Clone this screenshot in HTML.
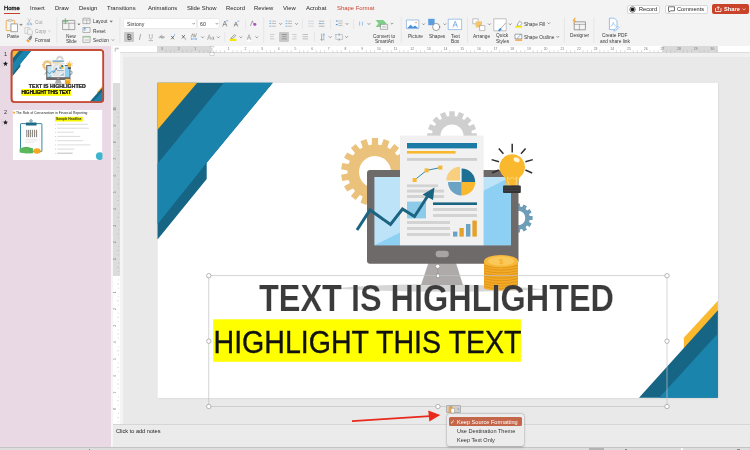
<!DOCTYPE html>
<html><head><meta charset="utf-8">
<style>
*{box-sizing:border-box;margin:0;padding:0}
html,body{width:750px;height:450px;overflow:hidden;background:#f3f3f3;font-family:"Liberation Sans",sans-serif;color:#333}
.a{position:absolute}
.t{position:absolute;white-space:nowrap;line-height:1;will-change:transform}
.tab{font-size:5.9px;color:#282828;top:5.6px}
.lb{font-size:4.8px;color:#3a3a3a;margin-top:1.2px}
svg.a{will-change:transform}
</style></head><body>
<div class="a" style="left:0;top:0;width:750px;height:450px;overflow:hidden">

<!-- ribbon background -->
<div class="a" style="left:0;top:0;width:750px;height:46px;background:#f3f3f3"></div>

<!-- tabs -->
<div class="t tab" style="left:4px;color:#111;-webkit-text-stroke:0.3px #111">Home</div>
<div class="a" style="left:4px;top:13px;width:16px;height:1px;background:#c43e2a"></div>
<div class="t tab" style="left:29.6px">Insert</div>
<div class="t tab" style="left:55px">Draw</div>
<div class="t tab" style="left:78.5px">Design</div>
<div class="t tab" style="left:107.2px">Transitions</div>
<div class="t tab" style="left:147.5px">Animations</div>
<div class="t tab" style="left:186.7px">Slide Show</div>
<div class="t tab" style="left:225.9px">Record</div>
<div class="t tab" style="left:254.1px">Review</div>
<div class="t tab" style="left:282.7px">View</div>
<div class="t tab" style="left:305.9px">Acrobat</div>
<div class="t tab" style="left:337.3px;color:#d0442c">Shape Format</div>

<!-- right buttons -->
<div class="a" style="left:626.5px;top:4.5px;width:33px;height:9.5px;background:#fff;border:0.5px solid #d8d8d8;border-radius:2px"></div>
<svg class="a" style="left:629px;top:6px" width="7" height="7" viewBox="0 0 7 7"><circle cx="3.5" cy="3.5" r="2.7" fill="none" stroke="#222" stroke-width="0.7"/><circle cx="3.5" cy="3.5" r="1.8" fill="#111"/></svg>
<div class="t" style="left:638.8px;top:7.2px;font-size:5.6px;color:#222">Record</div>
<div class="a" style="left:664.5px;top:4.5px;width:43px;height:9.5px;background:#fff;border:0.5px solid #d8d8d8;border-radius:2px"></div>
<svg class="a" style="left:667.5px;top:6.2px" width="7" height="7" viewBox="0 0 7 7"><path d="M0.5 0.8h6v4h-4l-1.5 1.5v-1.5h-0.5z" fill="none" stroke="#333" stroke-width="0.7"/></svg>
<div class="t" style="left:676.8px;top:7.2px;font-size:5.6px;color:#222">Comments</div>
<div class="a" style="left:711.5px;top:4px;width:37px;height:10px;background:#c9432a;border-radius:2px"></div>
<svg class="a" style="left:715px;top:6px" width="7" height="6" viewBox="0 0 7 6"><path d="M0.5 2v3.5h5.5v-3.5M3.2 4v-3.3M1.8 2l1.4-1.4 1.4 1.4" fill="none" stroke="#fff" stroke-width="0.8"/></svg>
<div class="t" style="left:723.8px;top:6.8px;font-size:5.7px;color:#fff;font-weight:bold">Share</div>
<svg class="a" style="left:742px;top:8px" width="4" height="3" viewBox="0 0 4 3"><path d="M0.5 0.5l1.5 1.5 1.5-1.5" fill="none" stroke="#fff" stroke-width="0.6"/></svg>

<!-- RIBBON ROW CONTENT -->
<!-- Ribbon labels -->
<div class="t lb" style="left:7.3px;top:33.6px">Paste</div>
<div class="t lb" style="left:34.8px;top:19.4px;color:#9a9a9a">Cut</div>
<div class="t lb" style="left:34.8px;top:29px;color:#9a9a9a">Copy</div>
<div class="t lb" style="left:34.8px;top:37.6px">Format</div>
<div class="t lb" style="left:66px;top:33.6px">New</div>
<div class="t lb" style="left:65.8px;top:38.4px">Slide</div>
<div class="t lb" style="left:92.8px;top:19.2px">Layout</div>
<div class="t lb" style="left:92.8px;top:28.4px">Reset</div>
<div class="t lb" style="left:92.8px;top:37.7px">Section</div>
<div class="t lb" style="left:372.8px;top:33.6px">Convert to</div>
<div class="t lb" style="left:374.6px;top:38.4px">SmartArt</div>
<div class="t lb" style="left:407.5px;top:33.6px">Picture</div>
<div class="t lb" style="left:428.6px;top:33.6px">Shapes</div>
<div class="t lb" style="left:450.6px;top:33.6px">Text</div>
<div class="t lb" style="left:450.8px;top:38.4px">Box</div>
<div class="t lb" style="left:473px;top:33.6px">Arrange</div>
<div class="t lb" style="left:496.3px;top:33.2px">Quick</div>
<div class="t lb" style="left:495.5px;top:38.4px">Styles</div>
<div class="t lb" style="left:524.4px;top:21.6px">Shape Fill</div>
<div class="t lb" style="left:524.4px;top:35px">Shape Outline</div>
<div class="t lb" style="left:570.2px;top:33.2px">Designer</div>
<div class="t lb" style="left:601.8px;top:33.2px">Create PDF</div>
<div class="t lb" style="left:599.8px;top:38.4px">and share link</div>

<!-- font boxes -->
<div class="a" style="left:124.2px;top:19.2px;width:71.8px;height:8.9px;background:#fff;border-radius:1.2px;box-shadow:0 0 0 0.4px #e2e2e2"></div>
<div class="t" style="left:127px;top:22px;font-size:5.2px;color:#333">Sintony</div>
<div class="a" style="left:197.6px;top:19.2px;width:21.5px;height:8.9px;background:#fff;border-radius:1.2px;box-shadow:0 0 0 0.4px #e2e2e2"></div>
<div class="t" style="left:199.8px;top:22px;font-size:5.2px;color:#333">60</div>
<!-- selected B and center align -->
<div class="a" style="left:124.2px;top:32.3px;width:9.8px;height:9.8px;background:#c9c9c9;border-radius:1px"></div>
<div class="a" style="left:279.3px;top:32.2px;width:9.8px;height:9.8px;background:#c9c9c9;border-radius:1px"></div>

<svg class="a" style="left:0;top:0" width="750" height="46" viewBox="0 0 750 46">
 <g fill="none" stroke-linecap="round" stroke-linejoin="round">
  <!-- separators -->
  <g stroke="#dedede" stroke-width="0.6">
   <path d="M56.8 17.4V42.6M119.9 17.4V42.6M245.5 20V28.5M224.7 32.5V41.5M263.7 17.4V42.6M302.4 20V28.5M330.5 20V28.5M353.5 20V28.5M314.5 32.5V41.5M401.2 17.4V42.6M467.5 17.4V42.6M564.4 17.4V42.6M593.9 17.4V42.6"/>
  </g>
  <!-- Paste -->
  <rect x="6.2" y="20.4" width="8.4" height="10.2" rx="0.8" stroke="#f0a848" stroke-width="0.9"/>
  <path d="M8.6 21.2h3.6l-0.6-1.8h-2.4z" stroke="#a9a9a9" stroke-width="0.6" fill="#eee"/>
  <rect x="11.3" y="23.9" width="6.2" height="7.8" stroke="#8f8f8f" stroke-width="0.8" fill="#fff"/>
  <path d="M20 24.6l1 1 1-1z" fill="#555" stroke="#555" stroke-width="0.4"/>
  <!-- Cut scissors -->
  <path d="M28 18.8l2.6 4.6M30.6 18.8L28 23.4" stroke="#b4b4b4" stroke-width="0.6"/>
  <circle cx="27.8" cy="24.2" r="0.9" stroke="#7fb0dc" stroke-width="0.6"/>
  <circle cx="30.8" cy="24.2" r="0.9" stroke="#7fb0dc" stroke-width="0.6"/>
  <!-- Copy -->
  <rect x="25.3" y="27.6" width="4.4" height="5.8" stroke="#b8b8b8" stroke-width="0.6"/>
  <path d="M28 29.2h2.6l1.8 1.8v3.4h-4.4z" stroke="#b8b8b8" stroke-width="0.6" fill="#f3f3f3"/>
  <path d="M48.3 30.7l1.2 1.1 1.2-1.1" stroke="#aaa" stroke-width="0.5"/>
  <!-- Format painter -->
  <path d="M26.2 40.4l2.2 2.2 1.4-1.4-2.2-2.2z" fill="#f0a040"/>
  <path d="M28 38.6l2.2 2.2 1.6-2.6 0.4-2.4-1.4-0.2z" fill="#8a8a8a"/>
  <!-- New slide -->
  <rect x="63" y="20.4" width="11.8" height="9.2" stroke="#9a9a9a" stroke-width="0.9"/>
  <path d="M63 23.2h11.8M68.9 23.2v6.4" stroke="#9a9a9a" stroke-width="0.8"/>
  <path d="M65.3 18.6v5.2M62.7 21.2h5.2" stroke="#4cae5a" stroke-width="0.8"/>
  <path d="M78 24l0.9 0.9 0.9-0.9z" fill="#555" stroke="#555" stroke-width="0.4"/>
  <!-- Layout -->
  <rect x="83.3" y="18.2" width="6.8" height="5.4" stroke="#9a9a9a" stroke-width="0.7"/>
  <path d="M83.3 20h6.8M86.7 20v3.6" stroke="#9a9a9a" stroke-width="0.6"/>
  <path d="M110.2 21.2l1 1 1-1z" fill="#555" stroke="#555" stroke-width="0.4"/>
  <!-- Reset -->
  <rect x="83.3" y="27.5" width="6.8" height="5" stroke="#9a9a9a" stroke-width="0.7"/>
  <path d="M84.8 30.6v-2.6M83.9 28.9l0.9-0.9 0.9 0.9" stroke="#3a8ad6" stroke-width="0.6"/>
  <!-- Section -->
  <rect x="83.3" y="36.4" width="6.8" height="6" stroke="#9a9a9a" stroke-width="0.7"/>
  <path d="M83.3 37h6.8" stroke="#8fd08f" stroke-width="1.2"/>
  <path d="M84.8 40h3.8" stroke="#9a9a9a" stroke-width="0.6"/>
  <path d="M112 39.6l1 1 1-1" stroke="#555" stroke-width="0.5"/>
  <!-- font chevrons -->
  <path d="M192.7 23.3l1 1 1-1M216 23.3l1 1 1-1" stroke="#444" stroke-width="0.5"/>
  <!-- grow / shrink -->
  <path d="M222.8 26.2l2-5.2 2 5.2M223.5 24.4h2.6" stroke="#666" stroke-width="0.6"/>
  <path d="M226.6 20.8h1.2" stroke="#3a8ad6" stroke-width="0.6"/>
  <path d="M234.2 26.2l1.7-4.2 1.7 4.2M234.8 24.7h2.2" stroke="#666" stroke-width="0.6"/>
  <path d="M237.6 21.2h1.2" stroke="#3a8ad6" stroke-width="0.6"/>
  <!-- clear formatting -->
  <path d="M250.6 25.6l1.8-4.8 1.8 4.8" stroke="#777" stroke-width="0.6"/>
  <circle cx="255" cy="24.4" r="1.4" fill="#b04cc0" stroke="none"/>
  <!-- B I U ab x2 x2 -->
  <path d="M128 34.4v5.2h1.9c0.9 0 1.3-0.6 1.3-1.3s-0.5-1.3-1.3-1.3h-1.9M128 34.4h1.7c0.7 0 1.1 0.5 1.1 1.1s-0.4 1.2-1.1 1.2" stroke="#444" stroke-width="0.8"/>
  <path d="M140.6 34.4l-1.2 5.2" stroke="#777" stroke-width="0.6"/>
  <path d="M149.4 34.4v3c0 1 0.6 1.6 1.4 1.6s1.4-0.6 1.4-1.6v-3M149 40.6h3.6" stroke="#888" stroke-width="0.55"/>
  <path d="M159.8 38l0.9-2.2 0.9 2.2M161.8 35v3M161.8 37.2c0.6-1 2.2-1 2.2 0.2s-1.6 1.2-2.2 0.2M158.8 37h5.6" stroke="#888" stroke-width="0.5"/>
  <path d="M171.4 36.2l2.4 2.8M173.8 36.2l-2.4 2.8" stroke="#444" stroke-width="0.7"/>
  <path d="M174.6 34.3v1" stroke="#3a8ad6" stroke-width="0.5"/>
  <path d="M182.2 35.4l2.4 2.8M184.6 35.4l-2.4 2.8" stroke="#444" stroke-width="0.7"/>
  <path d="M185.6 38.8v1" stroke="#3a8ad6" stroke-width="0.5"/>
  <!-- AV -->
  <path d="M191.2 37.2l1.3-3.4 1.3 3.4M194 33.8l1.2 3.4 1.2-3.4" stroke="#666" stroke-width="0.5"/>
  <path d="M191.2 39h5.4M191.8 38.4l-0.6 0.6 0.6 0.6M196 38.4l0.6 0.6-0.6 0.6" stroke="#3a8ad6" stroke-width="0.5"/>
  <path d="M201.6 36.8l1 1 1-1M217.4 36.8l1 1 1-1M239.9 36.8l1 1 1-1M255.8 36.8l1 1 1-1" stroke="#444" stroke-width="0.55"/>
  <!-- Aa -->
  <path d="M207.6 39.6l1.6-4.8 1.6 4.8M208.2 38h2" stroke="#888" stroke-width="0.5"/>
  <path d="M213.6 37.2c-0.8-0.6-2.2-0.2-2 1.2 0.2 1.2 2 1.2 2 0v-1.2v2.4" stroke="#888" stroke-width="0.5"/>
  <!-- highlighter -->
  <path d="M231.5 37.6l3-3 1.1 1.1-3 3-1.6 0.4z" stroke="#555" stroke-width="0.55"/>
  <rect x="229.8" y="38.8" width="6.6" height="2.2" fill="#f5e800" stroke="none"/>
  <!-- font colour A -->
  <path d="M247.4 39.4l1.6-4.8 1.6 4.8M248 37.8h2" stroke="#888" stroke-width="0.55"/>
  <rect x="246.5" y="40" width="5" height="1.6" fill="#fff" stroke="none"/>
  <!-- bullets -->
  <g stroke="#3a8ad6" stroke-width="0.9"><path d="M270 21.2h0.3M270 23.5h0.3M270 26.2h0.3"/></g>
  <g stroke="#8a8a8a" stroke-width="0.5"><path d="M272 21.2h3.6M272 23.5h3.6M272 26.2h3.6"/></g>
  <path d="M279.7 23.5l1 1 1-1M295.6 23.5l1 1 1-1M346 23.5l1 1 1-1M368 23.5l1 1 1-1M391 23.2l1 1 1-1M422.6 23.8l1 1 1-1M443.8 23.8l1 1 1-1M488.4 23.8l1 1 1-1M509.2 23.8l1 1 1-1M547.8 22.8l1 1 1-1M556.8 36.4l1 1 1-1" stroke="#444" stroke-width="0.55"/>
  <g stroke="#3a8ad6" stroke-width="0.6"><path d="M286 21h0.8M286 23.6h0.8M286 26.2h0.8"/></g>
  <g stroke="#8a8a8a" stroke-width="0.5"><path d="M288 21.2h3.6M288 23.5h3.6M288 26.2h3.6"/></g>
  <!-- indent -->
  <path d="M308.6 21.2h4.8M311 23.6h2.4M308.6 26.2h4.8" stroke="#bbb" stroke-width="0.5"/>
  <path d="M308.5 23.6h1.2" stroke="#9cc4ea" stroke-width="0.6"/>
  <path d="M319.2 21.2h4.8M321.6 23.6h2.4M319.2 26.2h4.8" stroke="#777" stroke-width="0.5"/>
  <path d="M319.2 23.6h1.4" stroke="#3a8ad6" stroke-width="0.7"/>
  <!-- line list -->
  <path d="M336.3 21h0.9M336.3 24.6h0.9" stroke="#3a8ad6" stroke-width="1"/>
  <path d="M338.6 21h3.6M338.6 23.2h3.6M338.6 25.4h3.6" stroke="#8a8a8a" stroke-width="0.5"/>
  <!-- columns -->
  <path d="M359.6 22v3.2M362.4 22v3.2" stroke="#9cc4ea" stroke-width="1"/>
  <!-- SmartArt -->
  <path d="M375.6 20l7.6 0 3.4 3.6-3 3.4h-8l2.8-3.4z" fill="#7fcf8a" stroke="none"/>
  <rect x="380.8" y="24.4" width="6.8" height="5" fill="#f5f5f5" stroke="#888" stroke-width="0.6"/>
  <path d="M382.3 26.9h3.8" stroke="#888" stroke-width="0.5"/>
  <!-- row2 align -->
  <path d="M270.4 34.5h3.8M270.4 36.7h2.6M270.4 38.9h3.8" stroke="#aaa" stroke-width="0.5"/>
  <path d="M282 34.5h4.6M282.6 36.7h3.4M282 38.9h4.6" stroke="#777" stroke-width="0.6"/>
  <path d="M292.4 34.5h3.8M293.6 36.7h2.6M292.4 38.9h3.8" stroke="#aaa" stroke-width="0.5"/>
  <path d="M303 34.5h4.6M303 36.7h4.6M303 38.9h4.6" stroke="#888" stroke-width="0.5"/>
  <!-- text direction / align text -->
  <path d="M321.6 34v6M320.8 39.4l1 1 1-1" stroke="#666" stroke-width="0.5"/>
  <path d="M323.8 37v-3M323 34.8l0.8-0.8 0.8 0.8M323.8 40v-2" stroke="#3a8ad6" stroke-width="0.5"/>
  <path d="M329.2 36.6l1 1 1-1M345.6 36.6l1 1 1-1" stroke="#444" stroke-width="0.55"/>
  <rect x="335.8" y="34.6" width="6.8" height="4.8" stroke="#9a9a9a" stroke-width="0.5" stroke-dasharray="1.2 0.8"/>
  <path d="M339.2 33.6v1.8M339.2 38.8v1.6" stroke="#3a8ad6" stroke-width="0.6"/>
  <!-- Picture -->
  <rect x="406.8" y="20" width="12" height="8.6" stroke="#6a9fd8" stroke-width="0.6" fill="#fff"/>
  <path d="M407.2 28.2l3.4-3.4 2.4 2.2 2-1.6 3.4 2.8z" fill="#4a8fd8" stroke="none"/>
  <circle cx="416" cy="22.6" r="0.8" fill="#f0a040" stroke="none"/>
  <!-- Shapes -->
  <rect x="428.2" y="18.8" width="6.4" height="6.4" fill="#5b9ee0" stroke="none"/>
  <circle cx="436.2" cy="27" r="3.6" fill="#fff" stroke="#666" stroke-width="0.6"/>
  <!-- Text box -->
  <rect x="448.6" y="19.2" width="13" height="10.4" fill="#fff" stroke="#6a9fd8" stroke-width="0.6"/>
  <path d="M453 27l2.2-5.8 2.2 5.8M453.8 25h2.8" stroke="#4a8fd8" stroke-width="0.6"/>
  <!-- Arrange -->
  <rect x="473.2" y="18.8" width="5" height="5" fill="#fff" stroke="#888" stroke-width="0.5"/>
  <rect x="475.6" y="21.4" width="6.4" height="6" fill="#f5c56a" stroke="none"/>
  <rect x="480" y="25.6" width="4.8" height="5" fill="#fff" stroke="#888" stroke-width="0.5"/>
  <!-- Quick styles -->
  <rect x="494.2" y="18.8" width="12" height="12" fill="#fff" stroke="#888" stroke-width="0.5"/>
  <path d="M498 30.4l2.4-2.6 1.4 1.4-2.6 2.2z" fill="#3a8ad6" stroke="none"/>
  <path d="M501 28.2l4.6-5" stroke="#666" stroke-width="0.5"/>
  <!-- Shape fill -->
  <path d="M517.2 24.8l2.4-3.6 2.6 2.2-2.6 2.6z" fill="#fff" stroke="#555" stroke-width="0.5"/>
  <rect x="515.2" y="26" width="7" height="1.6" fill="#f5e800" stroke="none"/>
  <!-- Shape outline -->
  <rect x="515.4" y="34.2" width="6.4" height="4.6" fill="#fff" stroke="#555" stroke-width="0.5"/>
  <path d="M517.4 38l3.2-3.2" stroke="#3a8ad6" stroke-width="0.7"/>
  <rect x="515.2" y="39.4" width="7" height="1.4" fill="#f0a040" stroke="none"/>
  <!-- Designer -->
  <rect x="574.6" y="21.8" width="10.8" height="8" fill="#f4f4f4" stroke="#888" stroke-width="0.8"/>
  <path d="M574.6 24.4h10.8M579.4 24.4v5.4" stroke="#888" stroke-width="0.6"/>
  <path d="M574.6 17.8l-2.2 3.4h2l-1.4 3.2 3.2-4h-2l1.6-2.6z" fill="#f0a030" stroke="none"/>
  <!-- Create PDF -->
  <path d="M609.8 18.2h4.6l2.6 2.6v8.8h-7.2z" fill="#fff" stroke="#5a9ee0" stroke-width="0.6"/>
  <path d="M611 26.4c1-0.4 2-2 2.2-4 0.6 2 1.6 3.2 2.6 3.6" stroke="#5a9ee0" stroke-width="0.5"/>
  <path d="M614.2 29.8l3.6-3.6 1.2 1.2-3.6 3.6h-1.2z" fill="#e8f1fb" stroke="#5a9ee0" stroke-width="0.5"/>
 </g>
</svg>


<!-- sidebar -->
<div class="a" style="left:0;top:46px;width:111px;height:401px;background:#e9d9e5"></div>
<div class="a" style="left:111px;top:46px;width:2px;height:401px;background:#f6f6f6"></div>

<!-- horizontal ruler strip -->
<div class="a" style="left:113px;top:46px;width:637px;height:10.5px;background:#f0f0f0"></div>
<div class="a" style="left:120px;top:46px;width:630px;height:7.3px;background:#fff;border-bottom:0.5px solid #ddd"></div>
<div class="a" style="left:157.3px;top:46px;width:54.7px;height:7.3px;background:#d9d9d9"></div>
<div class="a" style="left:662px;top:46px;width:56px;height:7.3px;background:#d9d9d9"></div>


<!-- vertical ruler -->
<div class="a" style="left:113px;top:46px;width:7px;height:378px;background:#fff"></div>
<div class="a" style="left:112.5px;top:82.8px;width:7px;height:192.9px;background:#dcdcdc"></div>
<div class="a" style="left:119.5px;top:53.3px;width:3.5px;height:370.7px;background:#f4f4f4"></div>

<svg class="a" style="left:0;top:0" width="750" height="450" viewBox="0 0 750 450">
<path d="M166.1 50V52.8M170.3 50V52.8M174.5 50V52.8M182.8 50V52.8M187.0 50V52.8M191.2 50V52.8M199.5 50V52.8M203.7 50V52.8M207.8 50V52.8M216.2 50V52.8M220.3 50V52.8M224.5 50V52.8M232.8 50V52.8M237.0 50V52.8M241.2 50V52.8M249.5 50V52.8M253.7 50V52.8M257.9 50V52.8M266.2 50V52.8M270.4 50V52.8M274.6 50V52.8M282.9 50V52.8M287.1 50V52.8M291.2 50V52.8M299.6 50V52.8M303.7 50V52.8M307.9 50V52.8M316.2 50V52.8M320.4 50V52.8M324.6 50V52.8M332.9 50V52.8M337.1 50V52.8M341.3 50V52.8M349.6 50V52.8M353.8 50V52.8M357.9 50V52.8M366.3 50V52.8M370.5 50V52.8M374.6 50V52.8M383.0 50V52.8M387.1 50V52.8M391.3 50V52.8M399.6 50V52.8M403.8 50V52.8M408.0 50V52.8M416.3 50V52.8M420.5 50V52.8M424.7 50V52.8M433.0 50V52.8M437.2 50V52.8M441.4 50V52.8M449.7 50V52.8M453.9 50V52.8M458.0 50V52.8M466.4 50V52.8M470.5 50V52.8M474.7 50V52.8M483.1 50V52.8M487.2 50V52.8M491.4 50V52.8M499.7 50V52.8M503.9 50V52.8M508.1 50V52.8M516.4 50V52.8M520.6 50V52.8M524.8 50V52.8M533.1 50V52.8M537.3 50V52.8M541.4 50V52.8M549.8 50V52.8M553.9 50V52.8M558.1 50V52.8M566.5 50V52.8M570.6 50V52.8M574.8 50V52.8M583.1 50V52.8M587.3 50V52.8M591.5 50V52.8M599.8 50V52.8M604.0 50V52.8M608.1 50V52.8M616.5 50V52.8M620.7 50V52.8M624.8 50V52.8M633.2 50V52.8M637.3 50V52.8M641.5 50V52.8M649.8 50V52.8M654.0 50V52.8M658.2 50V52.8M666.5 50V52.8M670.7 50V52.8M674.9 50V52.8M683.2 50V52.8M687.4 50V52.8M691.5 50V52.8M699.9 50V52.8M704.1 50V52.8M708.2 50V52.8M716.6 50V52.8" stroke="#b4b4b4" stroke-width="0.4" fill="none"/>
<g font-family="Liberation Sans" font-size="3.4" fill="#777"><text x="162.0" y="49.6" text-anchor="middle">3</text><text x="178.6" y="49.6" text-anchor="middle">2</text><text x="195.3" y="49.6" text-anchor="middle">1</text><text x="228.7" y="49.6" text-anchor="middle">1</text><text x="245.4" y="49.6" text-anchor="middle">2</text><text x="262.0" y="49.6" text-anchor="middle">3</text><text x="278.7" y="49.6" text-anchor="middle">4</text><text x="295.4" y="49.6" text-anchor="middle">5</text><text x="312.1" y="49.6" text-anchor="middle">6</text><text x="328.8" y="49.6" text-anchor="middle">7</text><text x="345.4" y="49.6" text-anchor="middle">8</text><text x="362.1" y="49.6" text-anchor="middle">9</text><text x="378.8" y="49.6" text-anchor="middle">10</text><text x="395.5" y="49.6" text-anchor="middle">11</text><text x="412.2" y="49.6" text-anchor="middle">12</text><text x="428.8" y="49.6" text-anchor="middle">13</text><text x="445.5" y="49.6" text-anchor="middle">14</text><text x="462.2" y="49.6" text-anchor="middle">15</text><text x="478.9" y="49.6" text-anchor="middle">16</text><text x="495.6" y="49.6" text-anchor="middle">17</text><text x="512.2" y="49.6" text-anchor="middle">18</text><text x="528.9" y="49.6" text-anchor="middle">19</text><text x="545.6" y="49.6" text-anchor="middle">20</text><text x="562.3" y="49.6" text-anchor="middle">21</text><text x="579.0" y="49.6" text-anchor="middle">22</text><text x="595.6" y="49.6" text-anchor="middle">23</text><text x="612.3" y="49.6" text-anchor="middle">24</text><text x="629.0" y="49.6" text-anchor="middle">25</text><text x="645.7" y="49.6" text-anchor="middle">26</text><text x="662.4" y="49.6" text-anchor="middle">27</text><text x="679.0" y="49.6" text-anchor="middle">28</text><text x="695.7" y="49.6" text-anchor="middle">29</text><text x="712.4" y="49.6" text-anchor="middle">30</text></g>
<path d="M118 113.1H119M117.2 117.2H119M118 121.4H119M118 129.8H119M117.2 133.9H119M118 138.1H119M118 146.4H119M117.2 150.6H119M118 154.8H119M118 163.1H119M117.2 167.3H119M118 171.4H119M118 179.8H119M117.2 184.0H119M118 188.1H119M118 196.5H119M117.2 200.6H119M118 204.8H119M118 213.1H119M117.2 217.3H119M118 221.5H119M118 229.8H119M117.2 234.0H119M118 238.2H119M118 246.5H119M117.2 250.7H119M118 254.8H119M118 263.2H119M117.2 267.4H119M118 271.5H119M118 279.9H119M117.2 284.0H119M118 288.2H119M118 296.6H119M117.2 300.7H119M118 304.9H119M118 313.2H119M117.2 317.4H119M118 321.6H119M118 329.9H119M117.2 334.1H119M118 338.2H119M118 346.6H119M117.2 350.8H119M118 354.9H119M118 363.3H119M117.2 367.4H119M118 371.6H119M118 379.9H119M117.2 384.1H119M118 388.3H119M118 396.6H119M117.2 400.8H119M118 405.0H119M118 413.3H119M117.2 417.5H119M118 421.6H119" stroke="#9a9a9a" stroke-width="0.35" fill="none"/>
<g font-family="Liberation Sans" font-size="3.4" fill="#777"><text transform="translate(116.2 108.9) rotate(-90)" text-anchor="middle" y="0">10</text><text transform="translate(116.2 125.6) rotate(-90)" text-anchor="middle" y="0">9</text><text transform="translate(116.2 142.3) rotate(-90)" text-anchor="middle" y="0">8</text><text transform="translate(116.2 158.9) rotate(-90)" text-anchor="middle" y="0">7</text><text transform="translate(116.2 175.6) rotate(-90)" text-anchor="middle" y="0">6</text><text transform="translate(116.2 192.3) rotate(-90)" text-anchor="middle" y="0">5</text><text transform="translate(116.2 209.0) rotate(-90)" text-anchor="middle" y="0">4</text><text transform="translate(116.2 225.7) rotate(-90)" text-anchor="middle" y="0">3</text><text transform="translate(116.2 242.3) rotate(-90)" text-anchor="middle" y="0">2</text><text transform="translate(116.2 259.0) rotate(-90)" text-anchor="middle" y="0">1</text><text transform="translate(116.2 292.4) rotate(-90)" text-anchor="middle" y="0">1</text><text transform="translate(116.2 309.1) rotate(-90)" text-anchor="middle" y="0">2</text><text transform="translate(116.2 325.7) rotate(-90)" text-anchor="middle" y="0">3</text><text transform="translate(116.2 342.4) rotate(-90)" text-anchor="middle" y="0">4</text><text transform="translate(116.2 359.1) rotate(-90)" text-anchor="middle" y="0">5</text><text transform="translate(116.2 375.8) rotate(-90)" text-anchor="middle" y="0">6</text><text transform="translate(116.2 392.5) rotate(-90)" text-anchor="middle" y="0">7</text><text transform="translate(116.2 409.1) rotate(-90)" text-anchor="middle" y="0">8</text></g>
<path d="M209.8 46.4h4.4l-2.2 2.4zM209.8 52.2h4.4l-2.2-2.4z" fill="#fff" stroke="#9a9a9a" stroke-width="0.35"/>
<rect x="210" y="52.6" width="4" height="2.6" fill="#fff" stroke="#9a9a9a" stroke-width="0.35"/>
<path d="M115.2 51.8v-3.6h3.2M117 49.6l1.4-1.4" stroke="#777" stroke-width="0.5" fill="none"/>
</svg>
<!-- canvas -->
<div class="a" style="left:123px;top:56.5px;width:627px;height:367.5px;background:#e9e9e9"></div>

<!-- slide -->
<div class="a" style="left:157.5px;top:82.7px;width:560.4px;height:315px;background:#fff;box-shadow:0 0 2px rgba(0,0,0,0.12)"></div>

<!-- notes -->
<div class="a" style="left:113px;top:424px;width:637px;height:23px;background:#ebebeb;border-top:0.7px solid #d6d6d6"></div>
<div class="t" style="left:116px;top:429.4px;font-size:5.6px;color:#222">Click to add notes</div>
<!-- status -->
<div class="a" style="left:0;top:447px;width:750px;height:3px;background:#dedede;border-top:0.6px solid #c4c4c4"></div>

<!-- SLIDE GRAPHICS -->
<svg class="a" style="left:0;top:0" width="750" height="450" viewBox="0 0 750 450">
 <defs>
 <clipPath id="slclip"><rect x="157.5" y="82.7" width="560.4" height="315"/></clipPath>
 <g id="slideg">
  <rect x="157.5" y="82.7" width="560.4" height="315" fill="#fff"/>
  <!-- top-left corner -->
  <polygon points="157.5,82.7 272.8,82.7 206.7,162.7 206.7,179 157.5,239.4" fill="#166584"/>
  <polygon points="157.5,82.7 197.2,82.7 157.5,129.8" fill="#fbb92f"/>
  <polygon points="223.7,82.7 272.8,82.7 206.7,162.7 157.5,224.3 157.5,163.8" fill="#1b84ac"/>
  <!-- bottom-right corner -->
  <polygon points="717.9,300.8 683.8,337.8 683.8,351 717.9,313" fill="#fbb92f"/>
  <polygon points="639,397.7 717.9,310.3 717.9,397.7" fill="#166584"/>
  <polygon points="659.2,397.7 717.9,333.4 717.9,397.7" fill="#1b84ac"/>
  <!-- stand shadow -->
  <path d="M331 288.4 Q440 279.6 547 289.6 Q440 294.6 331 288.4Z" fill="#d6d6d6"/>
  <!-- gears -->
  <path fill="#cfcfcf" fill-rule="evenodd" d="M449.3 116.2 L449.3 111.2 L454.7 111.2 L454.7 116.2 L457.0 116.6 L459.0 112.0 L464.0 114.1 L462.1 118.7 L464.1 120.1 L467.6 116.5 L471.5 120.4 L467.9 123.9 L469.3 125.9 L473.9 124.0 L476.0 129.0 L471.4 131.0 L471.8 133.3 L476.8 133.3 L476.8 138.7 L471.8 138.7 L471.4 141.0 L476.0 143.0 L473.9 148.0 L469.3 146.1 L467.9 148.1 L471.5 151.6 L467.6 155.5 L464.1 151.9 L462.1 153.3 L464.0 157.9 L459.0 160.0 L457.0 155.4 L454.7 155.8 L454.7 160.8 L449.3 160.8 L449.3 155.8 L447.0 155.4 L445.0 160.0 L440.0 157.9 L441.9 153.3 L439.9 151.9 L436.4 155.5 L432.5 151.6 L436.1 148.1 L434.7 146.1 L430.1 148.0 L428.0 143.0 L432.6 141.0 L432.2 138.7 L427.2 138.7 L427.2 133.3 L432.2 133.3 L432.6 131.0 L428.0 129.0 L430.1 124.0 L434.7 125.9 L436.1 123.9 L432.5 120.4 L436.4 116.5 L439.9 120.1 L441.9 118.7 L440.0 114.1 L445.0 112.0 L447.0 116.6Z M440.5 136.0 a11.5 11.5 0 1 0 23.0 0 a11.5 11.5 0 1 0 -23.0 0Z"/>
  <path fill="#ebc27c" fill-rule="evenodd" d="M371.8 144.7 L371.9 138.1 L378.1 138.1 L378.2 144.7 L381.4 145.2 L383.7 139.1 L389.5 141.2 L387.3 147.4 L390.1 149.0 L394.4 144.1 L399.1 148.0 L395.0 153.1 L397.1 155.6 L402.8 152.4 L405.9 157.7 L400.2 161.1 L401.4 164.1 L407.8 163.1 L408.9 169.2 L402.5 170.4 L402.5 173.6 L408.9 174.8 L407.8 180.9 L401.4 179.9 L400.2 182.9 L405.9 186.3 L402.8 191.6 L397.1 188.4 L395.0 190.9 L399.1 196.0 L394.4 199.9 L390.1 195.0 L387.3 196.6 L389.5 202.8 L383.7 204.9 L381.4 198.8 L378.2 199.3 L378.1 205.9 L371.9 205.9 L371.8 199.3 L368.6 198.8 L366.3 204.9 L360.5 202.8 L362.7 196.6 L359.9 195.0 L355.6 199.9 L350.9 196.0 L355.0 190.9 L352.9 188.4 L347.2 191.6 L344.1 186.3 L349.8 182.9 L348.6 179.9 L342.2 180.9 L341.1 174.8 L347.5 173.6 L347.5 170.4 L341.1 169.2 L342.2 163.1 L348.6 164.1 L349.8 161.1 L344.1 157.7 L347.2 152.4 L352.9 155.6 L355.0 153.1 L350.9 148.0 L355.6 144.1 L359.9 149.0 L362.7 147.4 L360.5 141.2 L366.3 139.1 L368.6 145.2Z M359.0 172.0 a16 16 0 1 0 32 0 a16 16 0 1 0 -32 0Z"/>
  <path fill="#6e9db8" fill-rule="evenodd" d="M529.6 216.0 L532.6 216.1 L532.6 219.9 L529.6 220.0 L529.1 222.1 L531.6 223.6 L529.7 226.9 L527.1 225.6 L525.6 227.1 L526.9 229.7 L523.6 231.6 L522.1 229.1 L520.0 229.6 L519.9 232.6 L516.1 232.6 L516.0 229.6 L513.9 229.1 L512.4 231.6 L509.1 229.7 L510.4 227.1 L508.9 225.6 L506.3 226.9 L504.4 223.6 L506.9 222.1 L506.4 220.0 L503.4 219.9 L503.4 216.1 L506.4 216.0 L506.9 213.9 L504.4 212.4 L506.3 209.1 L508.9 210.4 L510.4 208.9 L509.1 206.3 L512.4 204.4 L513.9 206.9 L516.0 206.4 L516.1 203.4 L519.9 203.4 L520.0 206.4 L522.1 206.9 L523.6 204.4 L526.9 206.3 L525.6 208.9 L527.1 210.4 L529.7 209.1 L531.6 212.4 L529.1 213.9Z M510.7 218.0 a7.3 7.3 0 1 0 14.6 0 a7.3 7.3 0 1 0 -14.6 0Z"/>
  <!-- monitor stand -->
  <path d="M428.4 263 L456 263 L463 285 L421 285Z" fill="#aeaaaa"/>
  
  <!-- monitor -->
  <rect x="367" y="170" width="151.5" height="93.7" rx="3" fill="#6f6a6a"/>
  <rect x="374.4" y="177" width="136.4" height="68.2" fill="#bde3f8"/>
  <path d="M374.4 245.2 L510.8 177 L510.8 245.2Z" fill="#8ed0f3"/>
  <rect x="435.6" y="250.7" width="13.2" height="6.5" rx="3.2" fill="#a8a4a4"/>
  <!-- paper -->
  <rect x="400" y="135.6" width="83.6" height="109.6" fill="#f1f1f1"/>
  <rect x="407" y="143" width="70" height="5.4" fill="#1b7aa6"/>
  <rect x="407" y="151" width="48.6" height="2.6" fill="#f9b82e"/>
  <rect x="407" y="158" width="70" height="2.8" fill="#cfcfcf"/>
  <polyline points="414.6,180 426.6,170.4 440.4,167.6" fill="none" stroke="#1b7aa6" stroke-width="0.9"/>
  <rect x="412.6" y="178" width="4" height="4" fill="#f9b82e"/>
  <rect x="424.6" y="168.4" width="4" height="4" fill="#f9b82e"/>
  <rect x="438.4" y="165.6" width="4" height="4" fill="#f9b82e"/>
  <!-- pie -->
  <path d="M461.6 182 L461.6 168.4 A13.6 13.6 0 0 1 475.2 182Z" fill="#1e6f94"/>
  <path d="M461.6 182 L475.2 182 A13.6 13.6 0 0 1 461.6 195.6Z" fill="#f9b82e"/>
  <path d="M461.6 182 L461.6 195.6 A13.6 13.6 0 0 1 448 182Z" fill="#6ba3c4"/>
  <path d="M460 180.4 L446.4 180.4 A13.6 13.6 0 0 1 460 166.8Z" fill="#f7cf7e"/>
  <g fill="#d3d3d3">
   <rect x="407" y="184.4" width="31" height="2.8"/>
   <rect x="407" y="189.6" width="37" height="3"/>
   <rect x="407" y="195" width="37" height="3"/>
   <rect x="433" y="208" width="44" height="3"/>
   <rect x="433" y="214" width="44" height="3"/>
   <rect x="407" y="221" width="43" height="3"/>
   <rect x="407" y="227" width="43" height="3"/>
   <rect x="407" y="233" width="43" height="3"/>
  </g>
  <rect x="433" y="202.4" width="44" height="2.6" fill="#1b6482"/>
  <rect x="407" y="201.6" width="19" height="16.8" fill="#8ecbe8"/>
  <rect x="453" y="231.6" width="4.4" height="5" fill="#6ba3c4"/>
  <rect x="459.4" y="228" width="4.4" height="8.6" fill="#e5a02a"/>
  <rect x="466" y="224" width="4.4" height="12.6" fill="#6ba3c4"/>
  <rect x="472.4" y="220.6" width="4.4" height="16" fill="#e5a02a"/>
  <!-- arrow -->
  <polyline points="357,230 370,210 390.5,224.5 402.5,209 414.5,216.5 429,194" fill="none" stroke="#1b6482" stroke-width="3" stroke-linejoin="miter" stroke-linecap="butt"/>
  <path d="M434.5 187.6 L433 200 L422.6 194.6Z" fill="#1b6482"/>
  <!-- bulb rays -->
  <g stroke="#2f2f2f" stroke-width="1.5" stroke-linecap="butt">
   <path d="M512.2 143.8v8.8M498.8 148.4l4.6 5.4M525.6 148.4l-4.6 5.4M491.6 159.6l7.4 2.2M532.8 159.6l-7.4 2.2M492 173l6.8-3M532.2 173l-6.8-3"/>
  </g>
  <!-- bulb -->
  <path d="M512.2 154.2 a12.8 12.8 0 0 1 8.2 22.6 c-1.6 1.4 -2.2 4 -2.4 8.6 h-11.6 c-0.2 -4.6 -0.8 -7.2 -2.4 -8.6 a12.8 12.8 0 0 1 8.2 -22.6Z" fill="#f9b82e"/>
  <path d="M504.4 168 a8.5 8.5 0 0 1 4 -7" fill="none" stroke="#fbd266" stroke-width="0" />
  <ellipse cx="516.6" cy="159.8" rx="3.2" ry="2.2" transform="rotate(25 516.6 159.8)" fill="#fff5d0"/>
  <path d="M508.4 185 l-1 -8 l2.4 2.4 l2.4 -2.4 l2.4 2.4 l2.4 -2.4 l-1 8" fill="none" stroke="#fde2a0" stroke-width="0.7"/>
  <rect x="503" y="185.6" width="17.8" height="7.4" rx="1" fill="#333"/>
  <path d="M503 188h17.8M503 190.4h17.8" stroke="#555" stroke-width="0.5"/>
  <!-- coins -->
  <rect x="484" y="261" width="34" height="27" fill="#f2aa27"/>
  <ellipse cx="501" cy="288" rx="17" ry="2.6" fill="#f2aa27"/>
  <path d="M484 265.4 q17 4.4 34 0M484 268.0 q17 4.4 34 0M484 270.7 q17 4.4 34 0M484 273.3 q17 4.4 34 0M484 276.0 q17 4.4 34 0M484 278.6 q17 4.4 34 0M484 281.3 q17 4.4 34 0M484 283.9 q17 4.4 34 0M484 286.6 q17 4.4 34 0" stroke="#dc9116" stroke-width="0.8" fill="none"/>
  <ellipse cx="501" cy="261.2" rx="17" ry="6.2" fill="#f7b93a"/>
  <ellipse cx="501" cy="261" rx="13" ry="4.6" fill="#fbc95a"/>
  <text x="501" y="263.6" font-family="Liberation Sans" font-size="7.5" font-weight="bold" fill="#f3ad2e" text-anchor="middle">$</text>
  <!-- texts -->
  <rect x="213.2" y="319.3" width="307.7" height="42.5" fill="#ffff00"/>
  <text x="259" y="311" font-family="Liberation Sans" font-size="36" font-weight="bold" fill="#3b3b3b" stroke="#fff" stroke-width="0.2" textLength="355" lengthAdjust="spacingAndGlyphs">TEXT IS HIGHLIGHTED</text>
  <text x="213.5" y="352.5" font-family="Liberation Sans" font-size="31" fill="#111" stroke="#111" stroke-width="0.35" textLength="308" lengthAdjust="spacingAndGlyphs">HIGHLIGHT THIS TEXT</text>
 </g>
 </defs>
 <use href="#slideg"/>
</svg>

<!-- selection box -->
<svg class="a" style="left:0;top:0" width="750" height="450" viewBox="0 0 750 450">
  <rect x="208.8" y="275.7" width="458.2" height="130.8" fill="none" stroke="#c2c2c2" stroke-width="0.7"/><path d="M437.7 268.4V274" stroke="#888" stroke-width="0.5"/>
  <g fill="#fff" stroke="#8a8a8a" stroke-width="0.6">
    <circle cx="208.8" cy="275.7" r="2.2"/><rect x="436.3" y="274.1" width="3.2" height="3.2"/><circle cx="437.7" cy="266.3" r="2.1"/><circle cx="667" cy="275.7" r="2.2"/>
    <circle cx="208.8" cy="341.2" r="2.2"/><circle cx="667" cy="341.2" r="2.2"/>
    <circle cx="208.8" cy="406.5" r="2.2"/><circle cx="437.9" cy="406.5" r="2.2"/><circle cx="667" cy="406.5" r="2.2"/>
  </g>
</svg>

<div class="a" style="left:589px;top:448.2px;width:15px;height:1.8px;background:#b4b4b4"></div>
<div class="a" style="left:624.5px;top:448.6px;width:2px;height:1.4px;background:#888"></div>
<div class="a" style="left:680.8px;top:448.2px;width:2.6px;height:2.6px;border-radius:50%;background:#fff"></div>
<div class="a" style="left:737px;top:448.6px;width:3px;height:1.4px;background:#888"></div>
<div class="a" style="left:88.5px;top:448.6px;width:1.6px;height:1.4px;background:#888"></div>
<!-- sidebar thumbnails -->
<div class="t" style="left:3.6px;top:51.6px;font-size:5.6px;color:#333">1</div>
<div class="t" style="left:3.6px;top:110.4px;font-size:5.6px;color:#333">2</div>
<svg class="a" style="left:0;top:0" width="112" height="170" viewBox="0 0 112 170">
 <path d="M5.5 61.2l0.75 1.6 1.7 0.2-1.3 1.2 0.35 1.7-1.5-0.85-1.5 0.85 0.35-1.7-1.3-1.2 1.7-0.2z" fill="#222"/>
 <path d="M5.5 119.9l0.75 1.6 1.7 0.2-1.3 1.2 0.35 1.7-1.5-0.85-1.5 0.85 0.35-1.7-1.3-1.2 1.7-0.2z" fill="#222"/>
 <path d="M2 60.5v7M2 119.5v7" stroke="#999" stroke-width="0.4" stroke-dasharray="0.8 0.6"/>
 <rect x="11.6" y="50" width="91.6" height="52" rx="3" fill="#fff" stroke="#c4462d" stroke-width="1.7"/>
 <g transform="translate(12.5 51) scale(0.1606) translate(-157.5 -82.7)"><use href="#slideg"/></g>
 <text x="28.8" y="87.67" font-family="Liberation Sans" font-size="5.78" font-weight="bold" fill="#3b3b3b" stroke="#3b3b3b" stroke-width="0.15" textLength="57" lengthAdjust="spacingAndGlyphs">TEXT IS HIGHLIGHTED</text>
 <text x="21.5" y="94.33" font-family="Liberation Sans" font-size="4.98" fill="#111" stroke="#111" stroke-width="0.2" textLength="49.5" lengthAdjust="spacingAndGlyphs">HIGHLIGHT THIS TEXT</text>
 <rect x="11.6" y="50" width="91.6" height="52" rx="3" fill="none" stroke="#c4462d" stroke-width="1.7"/>
 <!-- slide 2 -->
 <defs><clipPath id="c2"><rect x="12.8" y="109.8" width="89.6" height="50.3" rx="1"/></clipPath></defs>
 <g clip-path="url(#c2)">
  <rect x="12.8" y="109.8" width="89.6" height="50.3" fill="#fff"/>
  <circle cx="14.1" cy="112.6" r="1.1" fill="#f5a623"/>
  <text x="16" y="113.5" font-family="Liberation Sans" font-size="2.7" fill="#222" textLength="71.4" lengthAdjust="spacingAndGlyphs">The Role of Conservatism in Financial Reporting</text>
  <rect x="55.1" y="116.8" width="27.6" height="4.7" fill="#f5f500"/>
  <text x="56" y="120.3" font-family="Liberation Sans" font-size="3.2" font-weight="bold" fill="#333" textLength="25.6" lengthAdjust="spacingAndGlyphs">Sample Headline</text>
  <g fill="#555"><circle cx="55.6" cy="124.3" r="0.3"/><circle cx="55.6" cy="128.2" r="0.3"/><circle cx="55.6" cy="132.2" r="0.3"/><circle cx="55.6" cy="136.4" r="0.3"/><circle cx="55.6" cy="140.7" r="0.3"/><circle cx="55.6" cy="144.9" r="0.3"/><circle cx="55.6" cy="149.1" r="0.3"/><circle cx="55.6" cy="153.2" r="0.3"/></g>
  <g stroke="#bdbdbd" stroke-width="0.55"><path d="M57.2 124.3H88M57.2 128.2H89M57.2 132.2H73.8M57.2 136.4H80.2M57.2 140.7H83.2M57.2 144.9H90.3M57.2 149.1H74.1"/></g>
  <path d="M57.2 153.2H72.6" stroke="#8a8a8a" stroke-width="0.55"/>
  <rect x="20.5" y="123.6" width="21.4" height="28" rx="0.6" fill="#fff" stroke="#1f7a96" stroke-width="0.9"/>
  <rect x="23" y="126" width="16.6" height="23.6" fill="#fff" stroke="#e6e6e6" stroke-width="0.3"/>
  <rect x="25.8" y="122.6" width="10.8" height="2.8" rx="0.6" fill="#1f6a84"/>
  <circle cx="31" cy="120.9" r="1.2" fill="none" stroke="#1f6a84" stroke-width="0.7"/>
  <g stroke="#444" stroke-width="0.7"><path d="M26.8 129.8v7.4M28.6 129.8v7.4M30.4 129.8v7.4M32.4 129.8v7.4M34.6 129.8v7.4M36.6 129.8v7.4"/></g>
  <path d="M26.6 136.4l10.4-6" stroke="#f0b040" stroke-width="0.4"/>
  <g stroke="#d6d6d6" stroke-width="0.5"><path d="M25.4 139.4H37.4M25.4 141H37.4M25.4 142.6H34"/></g>
  <path d="M19.6 148.6l6.4-1.8 7 1.4v5l-6.8 0.4-6.6-1.2z" fill="#5cb85c"/>
  <path d="M22 148.4l4-1 4.6 1.4v4.4" fill="none" stroke="#3f9a3f" stroke-width="0.4"/>
  <ellipse cx="37" cy="151" rx="3.6" ry="2.8" fill="#f5a623"/>
  <circle cx="99.8" cy="156.1" r="3.9" fill="#3db5d0"/>
 </g>
</svg>

<!-- paste popup -->
<div class="a" style="left:446.4px;top:405.1px;width:14.2px;height:8.4px;background:#cfcfcf;border:0.5px solid #b0b0b0;border-radius:1px"></div>
<svg class="a" style="left:446px;top:405px" width="16" height="9" viewBox="0 0 16 9">
 <rect x="2.6" y="1.8" width="4.4" height="5.8" fill="#f0a848"/>
 <rect x="3.6" y="1.2" width="2.4" height="1.1" fill="#999"/>
 <rect x="5" y="3.4" width="3.4" height="4.6" fill="#fff" stroke="#888" stroke-width="0.4"/>
 <path d="M11.4 3.8l0.8 0.9 0.8-0.9z" fill="#555"/>
</svg>
<div class="a" style="left:446.8px;top:414.4px;width:77.3px;height:31.4px;background:#ececec;border-radius:2.5px;box-shadow:0 0.8px 2.5px rgba(0,0,0,0.28),0 0 0 0.4px rgba(0,0,0,0.12)"></div>
<div class="a" style="left:448.6px;top:416.6px;width:73.3px;height:9.1px;background:#c4664a;border-radius:1.5px"></div>
<div class="t" style="left:450.3px;top:419.6px;font-size:5.6px;color:#fff">&#10003;</div>
<div class="t" style="left:456.7px;top:419.6px;font-size:5.6px;color:#fff">Keep Source Formatting</div>
<div class="t" style="left:456.7px;top:428.8px;font-size:5.6px;color:#333">Use Destination Theme</div>
<div class="t" style="left:456.7px;top:437.9px;font-size:5.6px;color:#333">Keep Text Only</div>

<!-- red arrow -->
<svg class="a" style="left:0;top:0" width="750" height="450" viewBox="0 0 750 450">
 <path d="M352 421.2 L430 416.2" stroke="#e8291c" stroke-width="1.8" fill="none"/>
 <path d="M440.3 415 L428.2 410.6 L429.4 421.6Z" fill="#e8291c"/>
</svg>

</div>
</body></html>
